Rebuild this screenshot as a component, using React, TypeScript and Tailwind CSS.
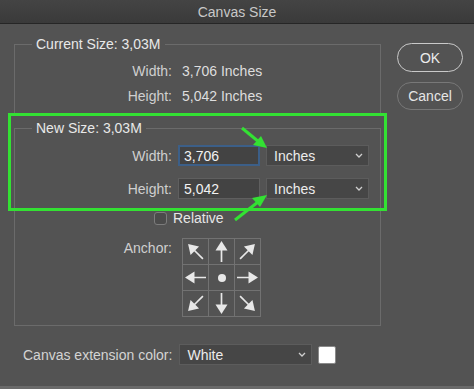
import type { ReactNode } from "react";

const font = { fontFamily: '"Liberation Sans", Arial, sans-serif' };

function Chevron() {
  return (
    <svg width="8" height="5" viewBox="0 0 8 5" className="text-[#cfcfcf]">
      <path d="M1 1 L4 4 L7 1" fill="none" stroke="currentColor" strokeWidth="1.3" />
    </svg>
  );
}

function Select({ value, width }: { value: string; width: string }) {
  return (
    <div
      className={`${width} h-[21px] flex items-center justify-between pl-[7px] pr-[5px] bg-[#464646] border border-[#5c5c5c] text-[#ececec]`}
    >
      <span>{value}</span>
      <Chevron />
    </div>
  );
}

// arrow drawn pointing up, rotated per cell
function AnchorArrow({ rotate }: { rotate: string }) {
  return (
    <svg width="23" height="23" viewBox="0 0 23 23" className={`text-[#e8e8e8] ${rotate}`}>
      <polygon points="11.5,1 5.5,10.5 17.5,10.5" fill="currentColor" />
      <line x1="11.5" y1="9" x2="11.5" y2="22" stroke="currentColor" strokeWidth="1.7" />
    </svg>
  );
}

function Cell({ children }: { children?: ReactNode }) {
  return (
    <div className="w-[26px] h-[26px] border-r border-b border-[#727272] flex items-center justify-center">
      {children}
    </div>
  );
}

function Row({ label, children }: { label: string; children: ReactNode }) {
  return (
    <div className="flex items-center h-[25px]">
      <span className="w-[157px] text-right text-[#cfcfcf]">{label}</span>
      <span className="ml-[10px] text-[#dedede]">{children}</span>
    </div>
  );
}

export default function App() {
  return (
    <div
      className="relative w-[474px] h-[389px] bg-[#535353] flex flex-col text-[14px] leading-[16px] overflow-hidden"
      style={font}
    >
      {/* title bar */}
      <div className="h-[24px] shrink-0 flex items-center justify-center bg-gradient-to-b from-[#444444] to-[#3a3a3a] border-b border-[#262626] text-[#c8c8c8]">
        Canvas Size
      </div>

      <div className="flex flex-1 pl-[14px] border-l-[3px] border-[#5c5c5c] -ml-[3px] border-b-[3px] border-b-[#6a6a6a]">
        {/* left column */}
        <div className="w-[367px] flex flex-col">
          <fieldset className="mt-[12px] border border-[#6b6b6b] pt-[6px] pb-[6px]">
            <legend className="ml-[17px] px-[4px] text-[#e8e8e8]">Current Size: 3,03M</legend>
            <Row label="Width:">3,706 Inches</Row>
            <Row label="Height:">5,042 Inches</Row>
          </fieldset>

          <fieldset className="mt-[5px] border border-[#6b6b6b] pb-[8px]">
            <legend className="ml-[17px] px-[4px] text-[#e8e8e8]">New Size: 3,03M</legend>
            <div className="flex items-center h-[21px] mt-[9px]">
              <span className="w-[157px] text-right text-[#cfcfcf]">Width:</span>
              <div className="ml-[6px] w-[82px] h-[21px] flex items-center pl-[4px] bg-[#434343] border-2 border-[#3c5f88] text-[#f2f2f2]">
                3,706
              </div>
              <div className="ml-[6px]">
                <Select value="Inches" width="w-[103px]" />
              </div>
            </div>
            <div className="flex items-center h-[21px] mt-[12px]">
              <span className="w-[157px] text-right text-[#cfcfcf]">Height:</span>
              <div className="ml-[6px] w-[82px] h-[21px] flex items-center pl-[5px] bg-[#434343] border border-[#5f5f5f] text-[#f2f2f2]">
                5,042
              </div>
              <div className="ml-[6px]">
                <Select value="Inches" width="w-[103px]" />
              </div>
            </div>
            <div className="flex items-center h-[16px] mt-[11px] pl-[139px]">
              <div className="w-[13px] h-[13px] rounded-[3px] border border-[#7c7c7c] bg-[#4b4b4b]" />
              <span className="ml-[6px] text-[#e6e6e6]">Relative</span>
            </div>
            <div className="flex items-start mt-[12px]">
              <span className="w-[157px] text-right text-[#cfcfcf] mt-[2px]">Anchor:</span>
              <div className="ml-[10px] grid grid-cols-3 border-l border-t border-[#727272]">
                <Cell><AnchorArrow rotate="-rotate-45" /></Cell>
                <Cell><AnchorArrow rotate="rotate-0" /></Cell>
                <Cell><AnchorArrow rotate="rotate-45" /></Cell>
                <Cell><AnchorArrow rotate="-rotate-90" /></Cell>
                <Cell><div className="w-[8px] h-[8px] rounded-full bg-[#e8e8e8]" /></Cell>
                <Cell><AnchorArrow rotate="rotate-90" /></Cell>
                <Cell><AnchorArrow rotate="-rotate-135" /></Cell>
                <Cell><AnchorArrow rotate="rotate-180" /></Cell>
                <Cell><AnchorArrow rotate="rotate-135" /></Cell>
              </div>
            </div>
          </fieldset>

          <div className="flex items-center mt-[18px] pl-[9px]">
            <span className="text-[#d4d4d4]">Canvas extension color:</span>
            <div className="ml-[7px]">
              <Select value="White" width="w-[133px]" />
            </div>
            <div className="ml-[6px] w-[18px] h-[18px] bg-white border border-[#8a8a8a] rounded-[2px]" />
          </div>
        </div>

        {/* buttons */}
        <div className="ml-[16px] mt-[19px] flex flex-col gap-[10px]">
          <div className="w-[66px] h-[29px] rounded-full border border-[#c9c9c9] flex items-center justify-center text-[#ececec]">
            OK
          </div>
          <div className="w-[66px] h-[28px] rounded-full border border-[#787878] flex items-center justify-center text-[#e6e6e6]">
            Cancel
          </div>
        </div>
      </div>

      {/* green annotation */}
      <div className="absolute left-[8px] top-[113px] w-[379px] h-[98px] border-[3px] border-[#33e133]" />
      <svg className="absolute left-0 top-0 pointer-events-none" width="474" height="389">
        <g stroke="#33e133" strokeWidth="3" fill="#33e133">
          <line x1="242" y1="128" x2="259" y2="142" />
          <polygon points="267,148 253,145 261,136" stroke="none" />
          <line x1="235" y1="220" x2="258" y2="202" />
          <polygon points="267,195 260,207 252,198" stroke="none" />
        </g>
      </svg>
    </div>
  );
}
